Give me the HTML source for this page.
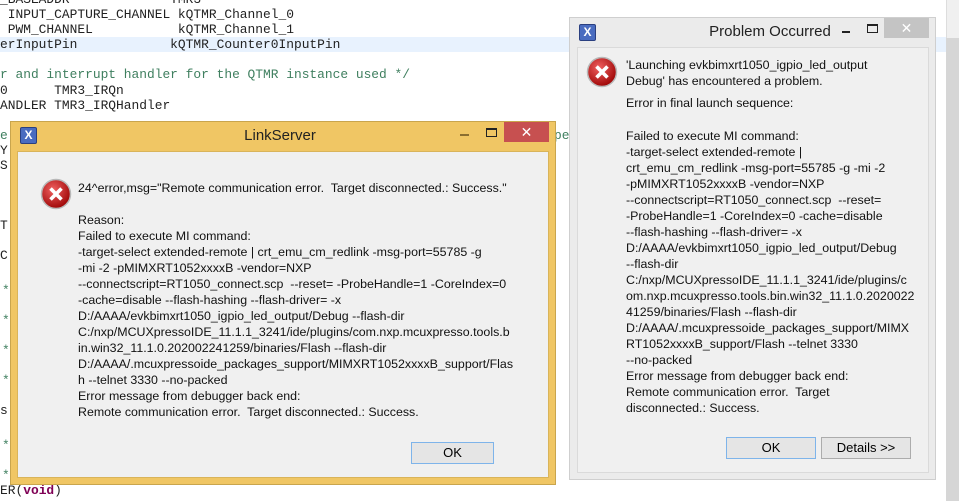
<!DOCTYPE html>
<html><head><meta charset="utf-8"><style>
body{margin:0;width:959px;height:501px;overflow:hidden;background:#fff;position:relative;font-family:"Liberation Sans",sans-serif}
.code{position:absolute;font-family:"Liberation Mono",monospace;font-size:12.9px;color:#222;white-space:pre;line-height:15px}
.cm{color:#3f7f5f}
.win{position:absolute}
.t{position:absolute;font-size:12.4px;color:#111;line-height:16px;white-space:pre}
.btn{position:absolute;background:#e5e5e5;border:1px solid #acacac;font-size:13px;text-align:center;box-sizing:border-box}
</style></head><body>
<div class="code" style="left:0;top:-8px">_BASEADDR             TMR3</div>
<div class="code" style="left:0;top:7px"> INPUT_CAPTURE_CHANNEL kQTMR_Channel_0</div>
<div class="code" style="left:0;top:22px"> PWM_CHANNEL           kQTMR_Channel_1</div>
<div style="position:absolute;left:0;top:37px;width:946px;height:15px;background:#e8f2fe"></div>
<div class="code" style="left:0;top:37px">erInputPin            kQTMR_Counter0InputPin</div>
<div class="code cm" style="left:0;top:67px">r and interrupt handler for the QTMR instance used */</div>
<div class="code" style="left:0;top:83px">0      TMR3_IRQn</div>
<div class="code" style="left:0;top:98px">ANDLER TMR3_IRQHandler</div>
<div class="code cm" style="left:0;top:128px">e</div>
<div class="code" style="left:0;top:143px">Y</div><div class="code" style="left:0;top:158px">S</div>
<div class="code" style="left:0;top:218px">T</div><div class="code" style="left:0;top:248px">C</div>
<div class="code cm" style="left:2px;top:283px">*</div><div class="code cm" style="left:2px;top:313px">*</div>
<div class="code cm" style="left:2px;top:343px">*</div><div class="code cm" style="left:2px;top:373px">*</div>
<div class="code" style="left:0;top:403px">s</div>
<div class="code cm" style="left:2px;top:438px">*</div><div class="code cm" style="left:2px;top:468px">*</div>
<div class="code" style="left:0;top:483px">ER(<b style="color:#7f0055">void</b>)</div>
<div class="code cm" style="left:554px;top:128px">pe</div>
<div style="position:absolute;left:946px;top:0;width:13px;height:501px;background:#f0f0f0;border-left:1px solid #ddd"></div>
<div style="position:absolute;left:946px;top:38px;width:13px;height:463px;background:#d6d6d6"></div>

<!-- LinkServer -->
<div class="win" style="left:10px;top:121px;width:546px;height:364px;background:#f0c664;border:1px solid #c9a54d;box-sizing:border-box"></div>
<div class="win" style="left:17px;top:151px;width:532px;height:327px;background:#f0f0f0;border:1px solid #d9b45a;box-sizing:border-box"></div>
<div style="position:absolute;left:20px;top:127px;width:15px;height:15px;background:#4a6cc0;border:1px solid #2a3f80;border-radius:2px;color:#fff;font-size:12px;line-height:15px;text-align:center;font-weight:bold">X</div>
<div style="position:absolute;left:180px;top:127px;width:200px;text-align:center;font-size:15px;color:#222">LinkServer</div>
<div style="position:absolute;left:460px;top:134px;width:9px;height:2px;background:#8a6e30"></div>
<div style="position:absolute;left:486px;top:128px;width:9px;height:6px;border:1px solid #222;border-top-width:2px"></div>
<div style="position:absolute;left:504px;top:122px;width:45px;height:20px;background:#c75050;color:#fff;text-align:center;font-size:14px;line-height:20px">✕</div>
<svg style="position:absolute;left:40px;top:178px" width="32" height="32"><defs><radialGradient id="g" cx="40%" cy="35%" r="65%"><stop offset="0" stop-color="#f06060"/><stop offset="1" stop-color="#a00808"/></radialGradient></defs><circle cx="16" cy="16" r="14.5" fill="url(#g)" stroke="#b8b8b8" stroke-width="1.5"/><path d="M10.5 10.5L21.5 21.5M21.5 10.5L10.5 21.5" stroke="#fff" stroke-width="3.6"/></svg>
<div class="t" style="left:78px;top:180px">24^error,msg="Remote communication error.  Target disconnected.: Success."</div>
<div class="t" style="left:78px;top:212px">Reason:
Failed to execute MI command:
-target-select extended-remote | crt_emu_cm_redlink -msg-port=55785 -g
-mi -2 -pMIMXRT1052xxxxB -vendor=NXP
--connectscript=RT1050_connect.scp  --reset= -ProbeHandle=1 -CoreIndex=0
-cache=disable --flash-hashing --flash-driver= -x
D:/AAAA/evkbimxrt1050_igpio_led_output/Debug --flash-dir
C:/nxp/MCUXpressoIDE_11.1.1_3241/ide/plugins/com.nxp.mcuxpresso.tools.b
in.win32_11.1.0.202002241259/binaries/Flash --flash-dir
D:/AAAA/.mcuxpressoide_packages_support/MIMXRT1052xxxxB_support/Flas
h --telnet 3330 --no-packed
Error message from debugger back end:
Remote communication error.  Target disconnected.: Success.</div>
<div class="btn" style="left:411px;top:442px;width:83px;height:22px;line-height:20px;border-color:#7eb4ea">OK</div>

<!-- Problem Occurred -->
<div class="win" style="left:569px;top:17px;width:367px;height:463px;background:#ebebeb;border:1px solid #cfcfcf;box-sizing:border-box"></div>
<div class="win" style="left:577px;top:47px;width:352px;height:426px;background:#f0f0f0;border:1px solid #dadada;box-sizing:border-box"></div>
<div style="position:absolute;left:579px;top:24px;width:15px;height:15px;background:#4a6cc0;border:1px solid #2a3f80;border-radius:2px;color:#fff;font-size:12px;line-height:15px;text-align:center;font-weight:bold">X</div>
<div style="position:absolute;left:670px;top:23px;width:200px;text-align:center;font-size:15px;color:#222">Problem Occurred</div>
<div style="position:absolute;left:842px;top:31px;width:8px;height:2px;background:#222"></div>
<div style="position:absolute;left:867px;top:24px;width:9px;height:6px;border:1px solid #222;border-top-width:2px"></div>
<div style="position:absolute;left:884px;top:18px;width:45px;height:20px;background:#c4c4c4;color:#fff;text-align:center;font-size:14px;line-height:20px">✕</div>
<svg style="position:absolute;left:586px;top:56px" width="32" height="32"><circle cx="16" cy="16" r="14.5" fill="url(#g)" stroke="#b8b8b8" stroke-width="1.5"/><path d="M10.5 10.5L21.5 21.5M21.5 10.5L10.5 21.5" stroke="#fff" stroke-width="3.6"/></svg>
<div class="t" style="left:626px;top:57px">'Launching evkbimxrt1050_igpio_led_output
Debug' has encountered a problem.</div>
<div class="t" style="left:626px;top:95px">Error in final launch sequence:</div>
<div class="t" style="left:626px;top:128px">Failed to execute MI command:
-target-select extended-remote |
crt_emu_cm_redlink -msg-port=55785 -g -mi -2
-pMIMXRT1052xxxxB -vendor=NXP
--connectscript=RT1050_connect.scp  --reset=
-ProbeHandle=1 -CoreIndex=0 -cache=disable
--flash-hashing --flash-driver= -x
D:/AAAA/evkbimxrt1050_igpio_led_output/Debug
--flash-dir
C:/nxp/MCUXpressoIDE_11.1.1_3241/ide/plugins/c
om.nxp.mcuxpresso.tools.bin.win32_11.1.0.2020022
41259/binaries/Flash --flash-dir
D:/AAAA/.mcuxpressoide_packages_support/MIMX
RT1052xxxxB_support/Flash --telnet 3330
--no-packed
Error message from debugger back end:
Remote communication error.  Target
disconnected.: Success.</div>
<div class="btn" style="left:726px;top:437px;width:90px;height:22px;line-height:20px;border-color:#7eb4ea">OK</div>
<div class="btn" style="left:821px;top:437px;width:90px;height:22px;line-height:20px">Details &gt;&gt;</div>
</body></html>
